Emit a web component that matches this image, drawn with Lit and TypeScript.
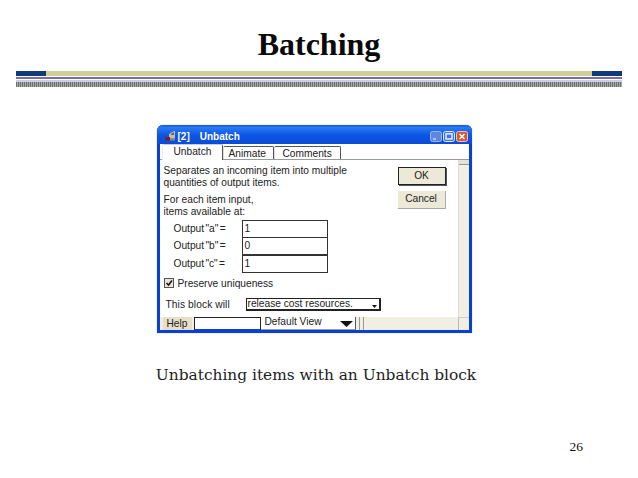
import { LitElement, html, css } from "lit";
import { customElement } from "lit/decorators.js";

@customElement("app-root")
export class AppRoot extends LitElement {
  static styles = css`
    :host { display: block; width: 638px; height: 478px; background: #fff; overflow: hidden; font-family: "Liberation Serif", serif; color: #000; }
    .slide { display: flex; flex-direction: column; height: 478px; }
    h1 { margin: 0; padding-top: 26px; height: 45px; box-sizing: content-box; font-size: 32px; line-height: 37px; font-weight: bold; text-align: center; color: #0a0a0a; }
    .rule { margin: 0 16px; height: 16px; display: flex; flex-direction: column; }
    .band { display: flex; height: 5px; background: #d0ce96; justify-content: space-between; }
    .band i { width: 30px; background: #0f3a78; }
    .purple { height: 2.5px; margin-top: .5px; background: #7b6cb0; }
    .dots { height: 6.5px; margin-top: 1px; background-color: #8a8a8a; background-image: linear-gradient(180deg, #cfcfe2 0 2px, transparent 2px), repeating-linear-gradient(90deg, #6f6f6f 0 1px, #a8a8a8 1px 2px); }
    .stage { display: flex; justify-content: center; padding: 38px 0 0 0; }
    .win { width: 315px; height: 208px; box-sizing: border-box; margin-left: -10px; border: 3px solid #0a3fd0; border-top: 0; border-radius: 6px 6px 0 0; background: #fff; display: flex; flex-direction: column; font-family: "Liberation Sans", Arial, sans-serif; font-size: 10.2px; color: #222; box-shadow: 0 0 1px #6a83d8; }
    .title { height: 19px; flex: none; margin: 0 -3px; border-radius: 6px 6px 0 0; background: linear-gradient(180deg, #0f5ae0 0%, #2b78f2 14%, #0b55e4 55%, #0a4cd6 100%); display: flex; align-items: center; padding: 3px 4px 0 8px; color: #fff; font-weight: bold; font-size: 10px; box-sizing: border-box; }
    .title svg.app { margin-right: 2px; }
    .title .num { margin-right: 10px; }
    .title .sp { flex: 1; }
    .tb { margin-left: 1px; display: block; }
    .tabs { height: 16px; flex: none; display: flex; align-items: flex-end; padding-left: 2px; border-bottom: 1px solid #9a9a96; background: #fff; box-sizing: border-box; }
    .tab { height: 13px; border: 1px solid #555; border-bottom: 0; border-left-color: #ddd; box-sizing: border-box; padding: 0 7px; line-height: 13px; font-size: 10.2px; border-radius: 2px 2px 0 0; }
    .tab.on { width: 61px; height: 16px; padding: 0 0 0 11px; margin-bottom: -1px; background: #fff; border-color: #ccc #555 #fff #eee; line-height: 14px; position: relative; }
    .tab.a { width: 51px; padding: 0 0 0 5px; }
    .tab.c { width: 67px; padding: 0 0 0 8px; }
    .mid { flex: 1; display: flex; min-height: 0; }
    .body { flex: 1; display: flex; padding: 5px 0 0 4px; min-width: 0; }
    .left { width: 229px; flex: none; }
    .left p { margin: 0; line-height: 12px; white-space: nowrap; }
    .p2 { margin-top: 5px !important; }
    .rows { margin: 3px 0 0 10px; display: grid; grid-template-columns: 68px 86px; grid-auto-rows: 17.4px; }
    .rows span { align-self: start; line-height: 15px; word-spacing: -1.5px; }
    .val { border: 1px solid #333; margin-top: -1px; padding: 1px 0 0 2px; line-height: 13px; box-sizing: content-box; height: 15px; background: #fff; }
    .chk { margin-top: 4px; display: flex; align-items: center; gap: 4px; height: 12px; }
    .box { width: 8px; height: 8px; background: #e8e4d8; border: 1px solid #555; box-sizing: content-box; display: block; }
    .will { margin: 8px 0 0 2px; display: flex; align-items: center; height: 14px; }
    .will b { font-weight: normal; width: 80px; flex: none; letter-spacing: .1px; }
    .sel { width: 135px; flex: none; height: 13px; box-sizing: border-box; border: 1px solid #222; border-right-width: 2px; border-bottom-width: 2px; line-height: 10px; padding-left: 1px; display: flex; justify-content: space-between; white-space: nowrap; }
    .sel svg { align-self: flex-end; margin: 0 2px 1px 0; }
    .btns { margin-left: 5px; padding-top: 2px; display: flex; flex-direction: column; gap: 6px; }
    .btn { width: 48px; height: 18px; box-sizing: border-box; background: #ece9d8; text-align: center; line-height: 16px; border-right: 1px solid #aaa; border-bottom: 1px solid #aaa; color: #222; }
    .btn.def { border: 1px solid #222; box-shadow: 1px 1px 0 #555; }
    .scroll { width: 11px; flex: none; background: #f1efe4; border-left: 1px solid #ddd; box-sizing: border-box; }
    .scroll i { display: block; height: 4px; border-bottom: 1px solid #999; background: #e6e3d4; }
    .foot { height: 13px; flex: none; background: #f1efe4; display: flex; align-items: stretch; padding-left: 3px; box-sizing: content-box; }
    .help { width: 29px; background: #e6e0c8; text-align: center; line-height: 14px; }
    .field { width: 67px; margin-left: 2px; border: 1px solid #222; background: #fff; box-sizing: border-box; border-bottom-color: #0a3fd0; }
    .view { width: 95px; background: #fff; border-right: 1px solid #555; border-bottom: 1px solid #999; box-sizing: border-box; line-height: 9px; padding: 0 0 0 4px; display: flex; justify-content: space-between; font-size: 10.2px; }
    .view svg { margin: 4px 2px 0 0; }
    .grip { width: 1px; margin-left: 3px; background: #999; }
    .spacer { flex: 1; }
    .corner { width: 11px; border-left: 1px solid #bbb; border-top: 1px solid #ccc; box-sizing: border-box; }
    .caption { margin: 32px 0 0 -6px; text-align: center; font-family: "DejaVu Serif", serif; font-size: 15.4px; line-height: 20px; color: #222; }
    .page { margin: 54px 55px 0 0; text-align: right; font-size: 13.5px; line-height: 16px; color: #111; }
  `;

  render() {
    return html`<div class="slide">
      <h1>Batching</h1>
      <div class="rule">
        <div class="band"><i></i><i></i></div>
        <div class="purple"></div>
        <div class="dots"></div>
      </div>
      <div class="stage">
        <div class="win">
          <div class="title">
            <svg class="app" width="11" height="10" viewBox="0 0 11 10"><path d="M0 9V6h4V3l5-3h1v9z" fill="#c4bfb2"/><path d="M6 3l3-2v3H6z" fill="#6b5f5a"/><path d="M0 6h5v3.5H0z" fill="#7d1d1d"/><path d="M5 7h5v2.5H5z" fill="#8f8a80"/></svg>
            <span class="num">[2]</span><span>Unbatch</span>
            <span class="sp"></span>
            <svg class="tb" width="12" height="11" viewBox="0 0 12 11"><rect x=".5" y=".5" width="11" height="10" rx="2" fill="#5f86e4" stroke="#9cb6ef"/><path d="M3 8h3" stroke="#c9d6f6" stroke-width="1.5"/></svg>
            <svg class="tb" width="12" height="11" viewBox="0 0 12 11"><rect x=".5" y=".5" width="11" height="10" rx="2" fill="#3f74e6" stroke="#e4ecfb"/><rect x="3" y="2.8" width="6" height="5.2" fill="none" stroke="#fff" stroke-width="1.3"/></svg>
            <svg class="tb" width="12" height="11" viewBox="0 0 12 11"><rect x=".5" y=".5" width="11" height="10" rx="2" fill="#d9572e" stroke="#f1c6b4"/><path d="M3.5 3l5 5M8.5 3l-5 5" stroke="#fff" stroke-width="1.6"/></svg>
          </div>
          <div class="tabs">
            <div class="tab on">Unbatch</div>
            <div class="tab a">Animate</div>
            <div class="tab c">Comments</div>
          </div>
          <div class="mid">
            <div class="body">
              <div class="left">
                <p>Separates an incoming item into multiple</p>
                <p>quantities of output items.</p>
                <p class="p2">For each item input,</p>
                <p>items available at:</p>
                <div class="rows">
                  <span>Output "a" =</span><div class="val">1</div>
                  <span>Output "b" =</span><div class="val">0</div>
                  <span>Output "c" =</span><div class="val">1</div>
                </div>
                <div class="chk">
                  <svg class="box" viewBox="0 0 8 8"><path d="M1.5 4l2 2 3.5-4.5" fill="none" stroke="#111" stroke-width="1.5"/></svg>
                  <span>Preserve uniqueness</span>
                </div>
                <div class="will"><b>This block will</b>
                  <div class="sel"><span>release cost resources.</span>
                    <svg width="5" height="3" viewBox="0 0 5 3"><path d="M0 0h5L2.5 3z" fill="#111"/></svg>
                  </div>
                </div>
              </div>
              <div class="btns">
                <div class="btn def">OK</div>
                <div class="btn">Cancel</div>
              </div>
            </div>
            <div class="scroll"><i></i></div>
          </div>
          <div class="foot">
            <div class="help">Help</div>
            <div class="field"></div>
            <div class="view"><span>Default View</span>
              <svg width="13" height="6" viewBox="0 0 13 6"><path d="M0 0h13L6.5 6z" fill="#111"/></svg>
            </div>
            <div class="grip"></div>
            <div class="grip"></div>
            <div class="spacer"></div>
            <div class="corner"></div>
          </div>
        </div>
      </div>
      <div class="caption">Unbatching items with an Unbatch block</div>
      <div class="page">26</div>
    </div>`;
  }
}
